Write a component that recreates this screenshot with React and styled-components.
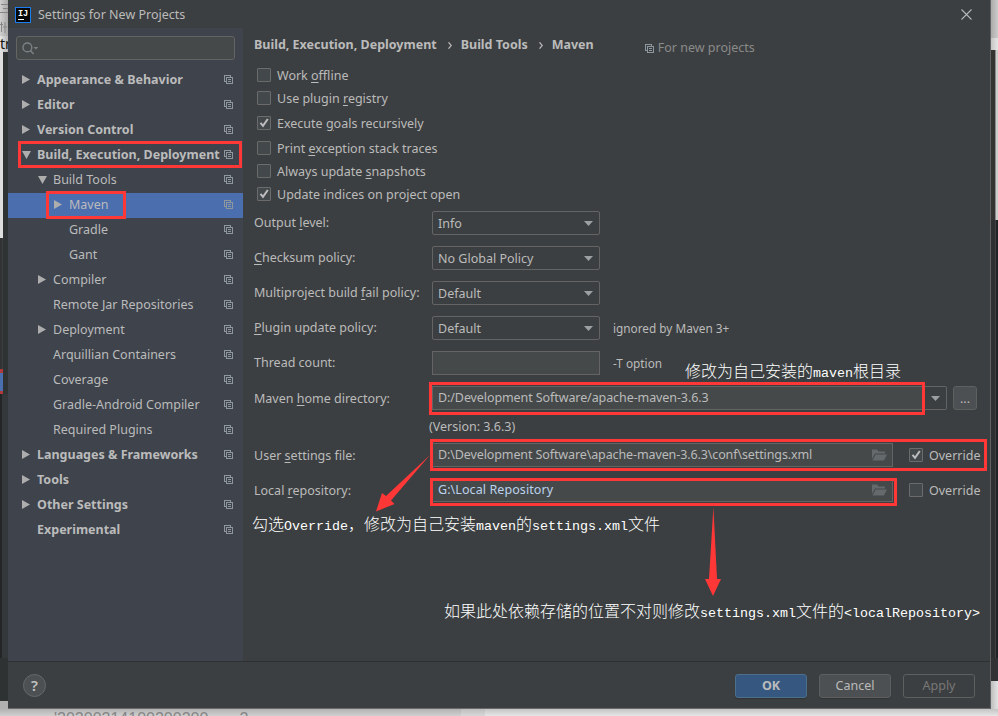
import React from 'react';
import styled, { createGlobalStyle, css } from 'styled-components';

const GlobalStyle = createGlobalStyle`
  * { box-sizing: border-box; }
  body { margin: 0; overflow: hidden; }
`;

const Desktop = styled.div`
  position: relative;
  display: grid;
  grid-template-columns: 8px 983px 7px;
  grid-template-rows: 709px 7px;
  width: 998px;
  height: 716px;
  overflow: hidden;
  background: #dcdcdc;
  font-family: 'Noto Sans', 'Open Sans', sans-serif;
  font-size: 12.5px;
  line-height: 16px;
  color: #bbbbbb;
`;

const Strip = styled.div`
  display: flex;
  flex-direction: column;
  overflow: hidden;
`;

const Segment = styled.div`
  flex: none;
  height: ${(p) => p.$h}px;
  background: ${(p) => p.$bg};
  overflow: hidden;
  white-space: nowrap;
  font-size: 14px;
  line-height: ${(p) => p.$h}px;
  color: ${(p) => p.$color || '#777'};
  svg { display: block; }
`;

const BottomStrip = styled.div`
  grid-column: 1 / -1;
  display: grid;
  grid-template-columns: 461px 24px 1fr;
  overflow: hidden;
`;

const BottomCell = styled.div`
  height: 7px;
  padding-left: 54px;
  overflow: hidden;
  white-space: pre;
  font-family: 'Liberation Sans', sans-serif;
  font-size: 16px;
  line-height: 16px;
  color: #858585;
  background: linear-gradient(${(p) => p.$from}, ${(p) => p.$to});
`;

const BottomText = styled.span`
  display: block;
  padding-top: 2px;
`;

const Dialog = styled.div`
  display: grid;
  grid-template-rows: 28px 633px 1fr;
  background: #3c3f41;
  border-right: 1px solid #5f6162;
  border-bottom: 1px solid #6a6a6a;
`;

const TitleBar = styled.header`
  display: flex;
  align-items: center;
  padding: 1px 18px 0 7px;
`;

const Logo = styled.div`
  width: 16px;
  height: 16px;
  padding: 2px 0 0 2px;
  border: 1px solid #1a7df0;
  background: #080808;
  color: #fff;
  font: bold 8.5px/8px 'Liberation Mono', monospace;
  &::after {
    content: '';
    display: block;
    width: 6px;
    height: 1px;
    margin-top: 1px;
    background: #fff;
  }
`;

const Title = styled.span`
  flex: 1;
  margin-left: 7px;
`;

const Body = styled.div`
  display: grid;
  grid-template-columns: 235px 1fr;
`;

const Sidebar = styled.nav`
  padding-top: 8px;
  background: #3e434c;
`;

const Search = styled.div`
  display: flex;
  align-items: center;
  width: 219px;
  height: 24px;
  margin: 0 0 8px 8px;
  padding-left: 5px;
  border: 1px solid #646464;
  border-radius: 3px;
  background: #45494a;
`;

const TreeRow = styled.div`
  display: flex;
  align-items: center;
  height: 25px;
  padding-left: ${(p) => 14 + p.$level * 16}px;
  padding-right: 10px;
  padding-bottom: 2px;
  font-weight: ${(p) => (p.$level ? 400 : 700)};
  background: ${(p) => (p.$selected ? '#4b6eaf' : 'transparent')};
`;

const ArrowSlot = styled.span`
  display: flex;
  width: 15px;
  flex: none;
`;

const TreeLabel = styled.span`
  flex: 1;
  white-space: nowrap;
`;

const Main = styled.main`
  padding: 9px 0 0 11px;
`;

const Breadcrumb = styled.div`
  display: flex;
  align-items: center;
  height: 16px;
  font-weight: 700;
`;

const Crumb = styled.span`
  white-space: nowrap;
`;

const CrumbSep = styled.svg`
  width: 4px;
  height: 7px;
  margin: 1px 9px 0 11px;
`;

const Scope = styled.span`
  display: flex;
  align-items: center;
  gap: 4px;
  margin: 6px 0 0 51px;
  font-weight: 400;
  color: #8a8a8a;
`;

const Checks = styled.div`
  padding: 15px 0 0 3px;
  height: 158px;
`;

const CheckRow = styled.label`
  display: flex;
  align-items: flex-start;
  height: ${(p) => p.$h || 23}px;
`;

const Box = styled.span`
  flex: none;
  width: 14px;
  height: 14px;
  border: 1px solid #6b6b6b;
  border-radius: 1px;
  background: #43494a;
  svg { display: block; }
`;

const CheckText = styled.span`
  margin-left: 6px;
  line-height: 16px;
  white-space: nowrap;
  u { text-underline-offset: 2px; }
`;

const FormRow = styled.div`
  display: flex;
  align-items: center;
  height: 24px;
  margin-bottom: ${(p) => (p.$tight ? 0 : 11)}px;
`;

const Label = styled.span`
  flex: none;
  width: 178px;
  white-space: nowrap;
  padding-top: ${(p) => (p.$low ? 2 : 0)}px;
  u { text-underline-offset: 2px; }
`;

const fieldFrame = css`
  display: flex;
  align-items: center;
  height: 24px;
  border: 1px solid #646464;
`;

const Combo = styled.div`
  ${fieldFrame}
  width: 168px;
  padding: 0 6px 0 5px;
  border-radius: 2px;
`;

const ComboValue = styled.span`
  flex: 1;
  padding-top: 2px;
`;

const Field = styled.div`
  ${fieldFrame}
  width: ${(p) => p.$w}px;
  padding: 0 5px 0 5px;
  background: #45494a;
  letter-spacing: ${(p) => (p.$bright ? 0.08 : p.$ls || 0)}px;
  white-space: nowrap;
  color: ${(p) => (p.$bright ? '#bcd2ea' : '#bbbbbb')};
`;

const Grow = styled.span`
  flex: 1;
`;

const ComboButton = styled.div`
  ${fieldFrame}
  width: 23px;
  padding-left: 7px;
  border-left: 0;
  border-radius: 0 2px 2px 0;
`;

const Browse = styled.button`
  width: 24px;
  height: 24px;
  margin-left: 6px;
  padding: 1px 0 0;
  border: 1px solid #5e6060;
  border-radius: 3px;
  background: #4c5052;
  color: #bbb;
  font: 12.5px 'Noto Sans', sans-serif;
`;

const Hint = styled.span`
  margin-left: 13px;
  font-size: 11.8px;
`;

const Version = styled.div`
  height: 33px;
  padding: 9px 0 0 175px;
`;

const Override = styled.label`
  display: flex;
  align-items: center;
  margin-left: 16px;
`;

const OverrideText = styled.span`
  margin-left: 6px;
  padding-top: 2px;
`;

const Footer = styled.footer`
  display: flex;
  align-items: center;
  gap: 12px;
  padding: 1px 15px 0 15px;
  border-top: 1px solid #2e3132;
`;

const Help = styled.button`
  width: 23px;
  height: 23px;
  padding: 0 0 1px;
  border: 1px solid #65696a;
  border-radius: 50%;
  background: #4c5052;
  color: #c0c0c0;
  font: 600 15px/20px 'Noto Sans', sans-serif;
`;

const Action = styled.button`
  width: 72px;
  height: 24px;
  padding: 1px 0 0;
  border-radius: 3px;
  font: 400 12.5px/20px 'Noto Sans', sans-serif;
  border: 1px solid #5e6060;
  background: #4c5052;
  color: #bbb;
  box-shadow: 0 1px 1px rgba(0, 0, 0, 0.2);
  ${(p) => p.$primary && css`
    font-weight: 700;
    border-color: #4c708c;
    background: #365880;
  `}
  ${(p) => p.$disabled && css`
    background: transparent;
    color: #777777;
    box-shadow: none;
  `}
`;

const Marker = styled.div`
  position: absolute;
  left: ${(p) => p.$x}px;
  top: ${(p) => p.$y}px;
  width: ${(p) => p.$w}px;
  height: ${(p) => p.$h}px;
  border: 3px solid #ff3737;
`;

const Arrows = styled.svg`
  position: absolute;
  left: 0;
  top: 0;
  pointer-events: none;
`;

const Note = styled.div`
  position: absolute;
  left: ${(p) => p.$x}px;
  top: ${(p) => p.$y}px;
  font: 300 16px/20px 'Noto Sans CJK SC', sans-serif;
  white-space: nowrap;
  color: #fff;
`;

const Latin = styled.span`
  font: 13.333px/20px 'Liberation Mono', monospace;
`;

const CopyIcon = () => (
  <svg width="9" height="9" viewBox="0 0 9 9" fill="none" stroke="#8d979d" shapeRendering="crispEdges">
    <path d="M2 6.5H.5V.5H6.5V2" />
    <rect x="2.5" y="2.5" width="6" height="6" />
    <path d="M4 4.5H7M4 6.5H7" />
  </svg>
);

const Right = () => (
  <svg width="8" height="9" viewBox="0 0 8 9"><path d="M0 0L8 4.5L0 9Z" fill="#adadad" /></svg>
);
const Down = () => (
  <svg width="9" height="8" viewBox="0 0 9 8"><path d="M0 0H9L4.5 8Z" fill="#adadad" /></svg>
);
const Caret = () => (
  <svg width="9" height="5" viewBox="0 0 9 5"><path d="M0 0H9L4.5 5Z" fill="#9da0a2" /></svg>
);
const Folder = () => (
  <svg width="15" height="12" viewBox="0 0 15 12" fill="#64696b">
    <path d="M0 .5H5L6.5 2.5H13V4.5H3L0 10Z" />
    <path d="M3.6 5.5H15L12 11.5H.5Z" />
  </svg>
);
const Tick = () => (
  <svg width="12" height="12" viewBox="0 0 12 12" fill="none" stroke="#bdbdbd" strokeWidth="2">
    <path d="M2.5 5.8L5 8.8L9.8 2" />
  </svg>
);

const tree = [
  ['Appearance & Behavior', 0, 'r'],
  ['Editor', 0, 'r'],
  ['Version Control', 0, 'r'],
  ['Build, Execution, Deployment', 0, 'd'],
  ['Build Tools', 1, 'd'],
  ['Maven', 2, 'r', true],
  ['Gradle', 2],
  ['Gant', 2],
  ['Compiler', 1, 'r'],
  ['Remote Jar Repositories', 1],
  ['Deployment', 1, 'r'],
  ['Arquillian Containers', 1],
  ['Coverage', 1],
  ['Gradle-Android Compiler', 1],
  ['Required Plugins', 1],
  ['Languages & Frameworks', 0, 'r'],
  ['Tools', 0, 'r'],
  ['Other Settings', 0, 'r'],
  ['Experimental', 0],
];

const checks = [
  [<>Work <u>o</u>ffline</>, false, 23],
  [<>Use plugin <u>r</u>egistry</>, false, 25],
  [<>Execute <u>g</u>oals recursively</>, true, 25],
  [<>Print <u>e</u>xception stack traces</>, false, 23],
  [<>Always update <u>s</u>napshots</>, false, 23],
  [<>Update indices on project open</>, true, 23],
];

const combos = [
  [<>Output <u>l</u>evel:</>, 'Info'],
  [<><u>C</u>hecksum policy:</>, 'No Global Policy'],
  [<>Multiproject build <u>f</u>ail policy:</>, 'Default'],
  [<><u>P</u>lugin update policy:</>, 'Default', 'ignored by Maven 3+'],
];

const Separator = () => (
  <CrumbSep viewBox="0 0 4 7" fill="none" stroke="#bbb" strokeWidth="1.2">
    <path d="M.5 .3L3.3 3.5L.5 6.7" />
  </CrumbSep>
);

const OverrideCheck = ({ checked }) => (
  <Override>
    <Box>{checked && <Tick />}</Box>
    <OverrideText>Override</OverrideText>
  </Override>
);

export default function App() {
  return (
    <>
      <GlobalStyle />
      <Desktop>
        <Strip>
          <Segment $h={36} $bg="linear-gradient(90deg,#cfcfcf,#a9a9a9)">
            <svg width="8" height="36" viewBox="0 0 8 36" fill="none" stroke="#858585">
              <path d="M1 4.5H8M3 8.5H8M0 12.5H8M0 24.5H3M1.5 22V32M3 27H7M5 22V33" />
            </svg>
          </Segment>
          <Segment $h={16} $bg="linear-gradient(90deg,#e6e6e6,#b5b5b5)" $color="#111">tr</Segment>
          <Segment $h={186} $bg="linear-gradient(90deg,#dedede 0 3px,#303334 3px)" />
          <Segment $h={131} $bg="linear-gradient(90deg,#313335 0 2px,#3c3f41 2px 3px,#303334 3px)" />
          <Segment $h={4} $bg="linear-gradient(90deg,#b03a3a 0 3px,#303334 3px)" />
          <Segment $h={18} $bg="linear-gradient(90deg,#4b6eaf 0 3px,#303334 3px)" />
          <Segment $h={3} $bg="linear-gradient(90deg,#b03a3a 0 3px,#303334 3px)" />
          <Segment $h={264} $bg="linear-gradient(90deg,#242526 0 2px,#35383a 2px)" />
          <Segment $h={43} $bg="#2f3233" />
          <Segment $h={8} $bg="#b0b0b0" />
        </Strip>
        <Dialog>
          <TitleBar>
            <Logo>IJ</Logo>
            <Title>Settings for New Projects</Title>
            <svg width="11" height="11" viewBox="0 0 11 11" stroke="#b4b6b7" strokeWidth="1.1">
              <path d="M.5 .5L10.5 10.5M10.5 .5L.5 10.5" />
            </svg>
          </TitleBar>
          <Body>
            <Sidebar>
              <Search>
                <svg width="17" height="13" viewBox="0 0 17 13" fill="none" stroke="#7b8386" strokeWidth="1.4">
                  <circle cx="5.4" cy="5.4" r="4.4" />
                  <path d="M8.5 8.7L11.6 12" />
                  <path d="M11.5 5H16.2L13.85 7.6Z" fill="#7b8386" stroke="none" />
                </svg>
              </Search>
              {tree.map(([name, level, arrow, selected]) => (
                <TreeRow key={name} $level={level} $selected={selected}>
                  <ArrowSlot>
                    {arrow === 'r' && <Right />}
                    {arrow === 'd' && <Down />}
                  </ArrowSlot>
                  <TreeLabel>{name}</TreeLabel>
                  <CopyIcon />
                </TreeRow>
              ))}
            </Sidebar>
            <Main>
              <Breadcrumb>
                <Crumb>Build, Execution, Deployment</Crumb>
                <Separator />
                <Crumb>Build Tools</Crumb>
                <Separator />
                <Crumb>Maven</Crumb>
                <Scope>
                  <CopyIcon />
                  For new projects
                </Scope>
              </Breadcrumb>
              <Checks>
                {checks.map(([text, on, h], i) => (
                  <CheckRow key={i} $h={h}>
                    <Box>{on && <Tick />}</Box>
                    <CheckText>{text}</CheckText>
                  </CheckRow>
                ))}
              </Checks>
              {combos.map(([label, value, hint], i) => (
                <FormRow key={i}>
                  <Label>{label}</Label>
                  <Combo>
                    <ComboValue>{value}</ComboValue>
                    <Caret />
                  </Combo>
                  {hint && <Hint>{hint}</Hint>}
                </FormRow>
              ))}
              <FormRow>
                <Label>Thread count:</Label>
                <Field $w={168} />
                <Hint>-T option</Hint>
              </FormRow>
              <FormRow $tight>
                <Label $low>Maven <u>h</u>ome directory:</Label>
                <Field $w={492} $ls={-0.09}>D:/Development Software/apache-maven-3.6.3</Field>
                <ComboButton><Caret /></ComboButton>
                <Browse>...</Browse>
              </FormRow>
              <Version>(Version: 3.6.3)</Version>
              <FormRow>
                <Label $low>User <u>s</u>ettings file:</Label>
                <Field $w={461} $ls={-0.11}>
                  <Grow>D:\Development Software\apache-maven-3.6.3\conf\settings.xml</Grow>
                  <Folder />
                </Field>
                <OverrideCheck checked />
              </FormRow>
              <FormRow>
                <Label $low>Local <u>r</u>epository:</Label>
                <Field $w={461} $bright>
                  <Grow>G:\Local Repository</Grow>
                  <Folder />
                </Field>
                <OverrideCheck />
              </FormRow>
            </Main>
          </Body>
          <Footer>
            <Help>?</Help>
            <Grow />
            <Action $primary>OK</Action>
            <Action>Cancel</Action>
            <Action $disabled>Apply</Action>
          </Footer>
        </Dialog>
        <Strip>
          <Segment $h={38} $bg="linear-gradient(90deg,#aaaaaa,#cccccc)" />
          <Segment $h={12} $bg="linear-gradient(90deg,#c4c4c4,#e6e6e6)" />
          <Segment $h={170} $bg="linear-gradient(90deg,#333333 0 4px,#8a8a8a 4px 5px,#cccccc 5px)" />
          <Segment $h={438} $bg="linear-gradient(90deg,#2d2f30 0 4px,#404244 4px 5px,#202122 5px)" />
          <Segment $h={23} $bg="#303234" />
          <Segment $h={28} $bg="linear-gradient(90deg,#bdbdbd,#e4e4e4)" />
        </Strip>
        <BottomStrip>
          <BottomCell $from="#b2b2b2" $to="#d0d0d0">
            <BottomText>'20200214100200200{'       '}2</BottomText>
          </BottomCell>
          <BottomCell $from="#bdbdbd" $to="#d8d8d8" />
          <BottomCell $from="#c4c4c4" $to="#e6e6e6" />
        </BottomStrip>

        <Marker $x={18} $y={141} $w={224} $h={27} />
        <Marker $x={46} $y={191} $w={80} $h={28} />
        <Marker $x={429} $y={382} $w={496} $h={33} />
        <Marker $x={430} $y={439} $w={557} $h={32} />
        <Marker $x={430} $y={478} $w={467} $h={28} />
        <Arrows width="998" height="716" viewBox="0 0 998 716" fill="#ff3737">
          <path d="M430 455L391 500.5L394.5 504L376 511.5L382 493L386 496Z" />
          <path d="M713.4 507L717 579H721L713 596L705 579H709Z" />
        </Arrows>
        <Note $x={685} $y={360}>修改为自己安装的<Latin>maven</Latin>根目录</Note>
        <Note $x={252} $y={513}>
          勾选<Latin>Override</Latin>，修改为自己安装<Latin>maven</Latin>的<Latin>settings.xml</Latin>文件
        </Note>
        <Note $x={444} $y={600}>
          如果此处依赖存储的位置不对则修改<Latin>settings.xml</Latin>文件的<Latin>&lt;localRepository&gt;</Latin>
        </Note>
      </Desktop>
    </>
  );
}
